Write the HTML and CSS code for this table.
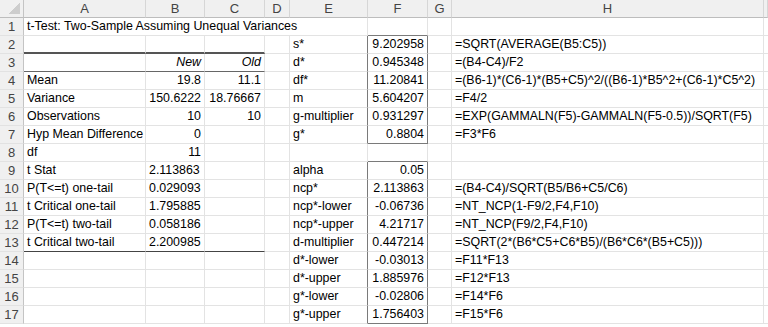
FILE: index.html
```html
<!DOCTYPE html>
<html lang="en">
<head>
<meta charset="utf-8">
<title>t-Test: Two-Sample Assuming Unequal Variances</title>
<link rel="stylesheet" href="styles.css">
</head>
<body>
<div class="sheet">
  <!-- header row -->
  <div class="hd corner"></div>
  <div class="hd">A</div><div class="hd">B</div><div class="hd">C</div><div class="hd">D</div>
  <div class="hd">E</div><div class="hd">F</div><div class="hd">G</div><div class="hd">H</div><div class="hd"></div>

  <!-- row 1 -->
  <div class="rn">1</div>
  <div class="c title">t-Test: Two-Sample Assuming Unequal Variances</div>
  <div class="c bxt"></div><div class="c"></div><div class="c"></div><div class="c"></div>

  <!-- row 2 -->
  <div class="rn">2</div>
  <div class="c thick"></div><div class="c thick"></div><div class="c thick"></div><div class="c"></div>
  <div class="c bxr">s*</div><div class="c r bxr">9.202958</div><div class="c"></div><div class="c">=SQRT(AVERAGE(B5:C5))</div><div class="c"></div>

  <!-- row 3 -->
  <div class="rn">3</div>
  <div class="c thin"></div><div class="c thin r i">New</div><div class="c thin r i">Old</div><div class="c"></div>
  <div class="c bxr">d*</div><div class="c r bxr">0.945348</div><div class="c"></div><div class="c">=(B4-C4)/F2</div><div class="c"></div>

  <!-- row 4 -->
  <div class="rn">4</div>
  <div class="c">Mean</div><div class="c r">19.8</div><div class="c r">11.1</div><div class="c"></div>
  <div class="c bxr">df*</div><div class="c r bxr">11.20841</div><div class="c"></div><div class="c">=(B6-1)*(C6-1)*(B5+C5)^2/((B6-1)*B5^2+(C6-1)*C5^2)</div><div class="c"></div>

  <!-- row 5 -->
  <div class="rn">5</div>
  <div class="c">Variance</div><div class="c r">150.6222</div><div class="c r">18.76667</div><div class="c"></div>
  <div class="c bxr">m</div><div class="c r bxr">5.604207</div><div class="c"></div><div class="c">=F4/2</div><div class="c"></div>

  <!-- row 6 -->
  <div class="rn">6</div>
  <div class="c">Observations</div><div class="c r">10</div><div class="c r">10</div><div class="c"></div>
  <div class="c bxr">g-multiplier</div><div class="c r bxr">0.931297</div><div class="c"></div><div class="c">=EXP(GAMMALN(F5)-GAMMALN(F5-0.5))/SQRT(F5)</div><div class="c"></div>

  <!-- row 7 -->
  <div class="rn">7</div>
  <div class="c">Hyp Mean Difference</div><div class="c r">0</div><div class="c"></div><div class="c"></div>
  <div class="c bxr">g*</div><div class="c r bxr bxb">0.8804</div><div class="c"></div><div class="c">=F3*F6</div><div class="c"></div>

  <!-- row 8 -->
  <div class="rn">8</div>
  <div class="c">df</div><div class="c r">11</div><div class="c"></div><div class="c"></div>
  <div class="c"></div><div class="c bxt"></div><div class="c"></div><div class="c"></div><div class="c"></div>

  <!-- row 9 -->
  <div class="rn">9</div>
  <div class="c">t Stat</div><div class="c">2.113863</div><div class="c"></div><div class="c"></div>
  <div class="c bxr">alpha</div><div class="c r bxr">0.05</div><div class="c"></div><div class="c"></div><div class="c"></div>

  <!-- row 10 -->
  <div class="rn">10</div>
  <div class="c">P(T&lt;=t) one-tail</div><div class="c">0.029093</div><div class="c"></div><div class="c"></div>
  <div class="c bxr">ncp*</div><div class="c r bxr">2.113863</div><div class="c"></div><div class="c">=(B4-C4)/SQRT(B5/B6+C5/C6)</div><div class="c"></div>

  <!-- row 11 -->
  <div class="rn">11</div>
  <div class="c">t Critical one-tail</div><div class="c">1.795885</div><div class="c"></div><div class="c"></div>
  <div class="c bxr">ncp*-lower</div><div class="c r bxr">-0.06736</div><div class="c"></div><div class="c">=NT_NCP(1-F9/2,F4,F10)</div><div class="c"></div>

  <!-- row 12 -->
  <div class="rn">12</div>
  <div class="c">P(T&lt;=t) two-tail</div><div class="c">0.058186</div><div class="c"></div><div class="c"></div>
  <div class="c bxr">ncp*-upper</div><div class="c r bxr">4.21717</div><div class="c"></div><div class="c">=NT_NCP(F9/2,F4,F10)</div><div class="c"></div>

  <!-- row 13 -->
  <div class="rn">13</div>
  <div class="c tot">t Critical two-tail</div><div class="c tot">2.200985</div><div class="c tot"></div><div class="c"></div>
  <div class="c bxr">d-multiplier</div><div class="c r bxr">0.447214</div><div class="c"></div><div class="c">=SQRT(2*(B6*C5+C6*B5)/(B6*C6*(B5+C5)))</div><div class="c"></div>

  <!-- row 14 -->
  <div class="rn">14</div>
  <div class="c"></div><div class="c"></div><div class="c"></div><div class="c"></div>
  <div class="c bxr">d*-lower</div><div class="c r bxr">-0.03013</div><div class="c"></div><div class="c">=F11*F13</div><div class="c"></div>

  <!-- row 15 -->
  <div class="rn">15</div>
  <div class="c"></div><div class="c"></div><div class="c"></div><div class="c"></div>
  <div class="c bxr">d*-upper</div><div class="c r bxr">1.885976</div><div class="c"></div><div class="c">=F12*F13</div><div class="c"></div>

  <!-- row 16 -->
  <div class="rn">16</div>
  <div class="c"></div><div class="c"></div><div class="c"></div><div class="c"></div>
  <div class="c bxr">g*-lower</div><div class="c r bxr">-0.02806</div><div class="c"></div><div class="c">=F14*F6</div><div class="c"></div>

  <!-- row 17 -->
  <div class="rn">17</div>
  <div class="c"></div><div class="c"></div><div class="c"></div><div class="c"></div>
  <div class="c bxr">g*-upper</div><div class="c r bxr bxb">1.756403</div><div class="c"></div><div class="c">=F15*F6</div><div class="c"></div>
</div>
</body>
</html>
```

FILE: styles.css
```css
html, body {
  margin: 0;
  padding: 0;
  background: #ffffff;
}

.sheet {
  display: grid;
  grid-template-columns: 24px 122px 59px 60px 25px 78px 60px 24px 312px 4px;
  grid-auto-rows: 18px;
  width: 768px;
  font-family: "Liberation Sans", Arial, sans-serif;
  font-size: 12.4px;
  color: #000;
}

.sheet > div {
  box-sizing: border-box;
  white-space: nowrap;
  overflow: hidden;
  line-height: 17px;
}

.hd {
  background: #f0f0f0;
  color: #444;
  font-size: 13px;
  text-align: center;
  border-right: 1px solid #d6d6d6;
  border-bottom: 1px solid #bdbdbd;
}

.corner {
  background-color: #f0f0f0;
  background-image: linear-gradient(135deg, transparent 50%, #cdcdcd 50%);
  background-size: 11px 11px;
  background-position: right 3px bottom 3px;
  background-repeat: no-repeat;
  border-right: 1px solid #c4c4c4;
}

.rn {
  background: #f0f0f0;
  color: #444;
  font-size: 13px;
  text-align: center;
  border-right: 1px solid #c4c4c4;
  border-bottom: 1px solid #e2e2e2;
}

.c {
  padding: 0 3px;
  border-right: 1px solid #e3e3e3;
  border-bottom: 1px solid #e3e3e3;
}

.title {
  grid-column: span 5;
  overflow: visible;
}

.r { text-align: right; }
.i { font-style: italic; }

.thick { border-bottom: 2px solid #555; }
.thin { border-bottom: 1px solid #666; }
.tot { border-bottom: 1px solid #444; }

.bxr { border-right: 1px solid #7a7a7a; }
.bxt { border-bottom: 1px solid #7a7a7a; }
.bxb { border-bottom: 1px solid #7a7a7a; }
```
